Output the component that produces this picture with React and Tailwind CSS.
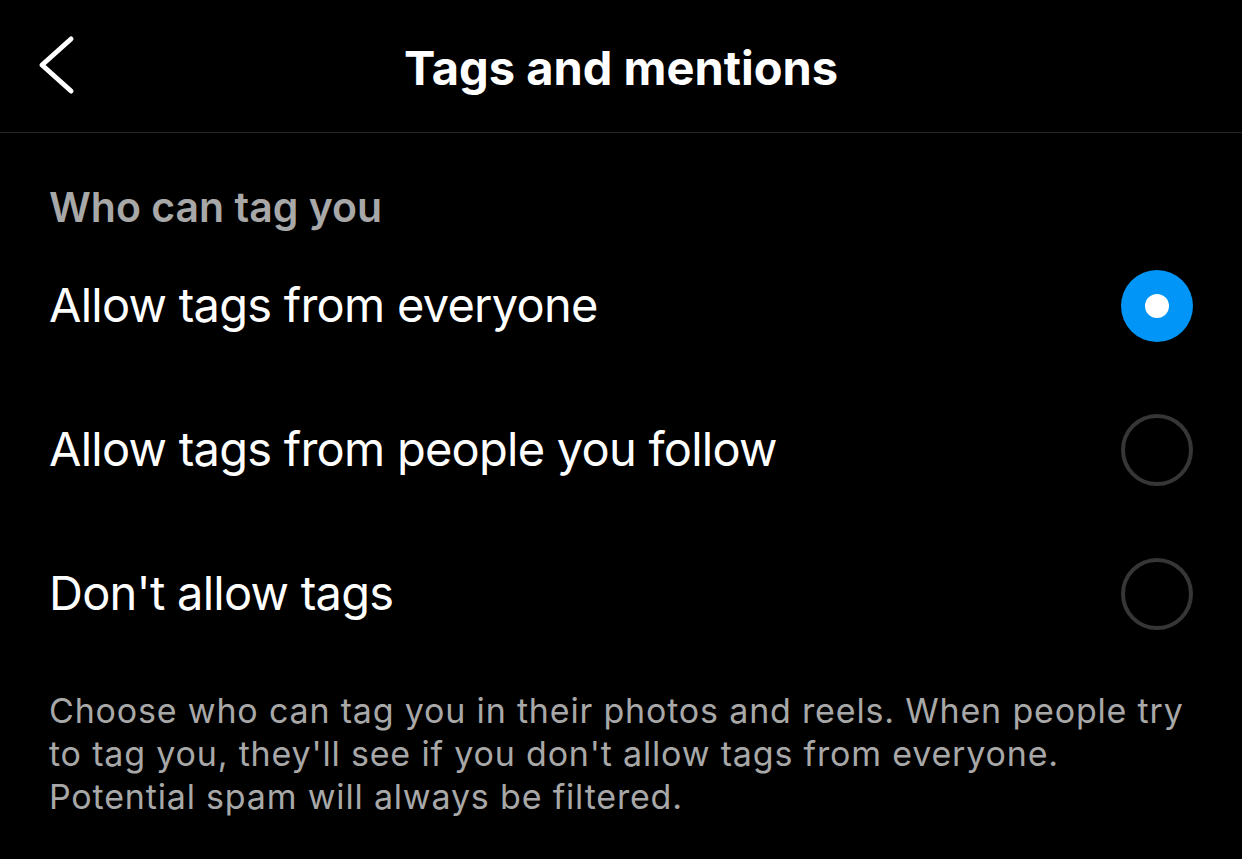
export default function App() {
  const options = [
    { label: "Allow tags from everyone", selected: true },
    { label: "Allow tags from people you follow", selected: false },
    { label: "Don't allow tags", selected: false },
  ];
  return (
    <div
      className="w-[1242px] h-[859px] bg-black text-white overflow-hidden"
      style={{ fontFamily: "Inter, 'Noto Sans', sans-serif" }}
    >
      <header className="relative h-[133px] border-b border-[#262626] flex items-center justify-center">
        <button className="absolute left-[30px] top-[30px] w-[50px] h-[70px]">
          <svg width="50" height="70" viewBox="0 0 50 70" fill="none">
            <path
              d="M41 9 L12 35 L41 61"
              stroke="white"
              strokeWidth="5"
              strokeLinecap="round"
              strokeLinejoin="round"
            />
          </svg>
        </button>
        <h1 className="text-[47px] font-bold tracking-[0px] leading-none mt-[2px]">
          Tags and mentions
        </h1>
      </header>

      <div className="px-[49px]">
        <div className="h-[101px] flex items-end pb-[6px]">
          <h2 className="text-[41px] font-semibold text-[#a8a8a8] leading-none">
            Who can tag you
          </h2>
        </div>

        {options.map((o) => (
          <div key={o.label} className="h-[144px] flex items-center justify-between">
            <span className="text-[47px] leading-none tracking-[-0.75px] -mt-[3px]">{o.label}</span>
            {o.selected ? (
              <div className="w-[72px] h-[72px] rounded-full bg-[#0095f6] flex items-center justify-center">
                <div className="w-[24px] h-[24px] rounded-full bg-white" />
              </div>
            ) : (
              <div className="w-[72px] h-[72px] rounded-full border-[4px] border-[#363636]" />
            )}
          </div>
        ))}

        <p className="mt-[23px] w-[1160px] text-[34px] leading-[43px] text-[#a8a8a8] tracking-[0.82px]">
          Choose who can tag you in their photos and reels. When people try to tag you, they'll see if you don't allow tags from everyone. Potential spam will always be filtered.
        </p>
      </div>
    </div>
  );
}
